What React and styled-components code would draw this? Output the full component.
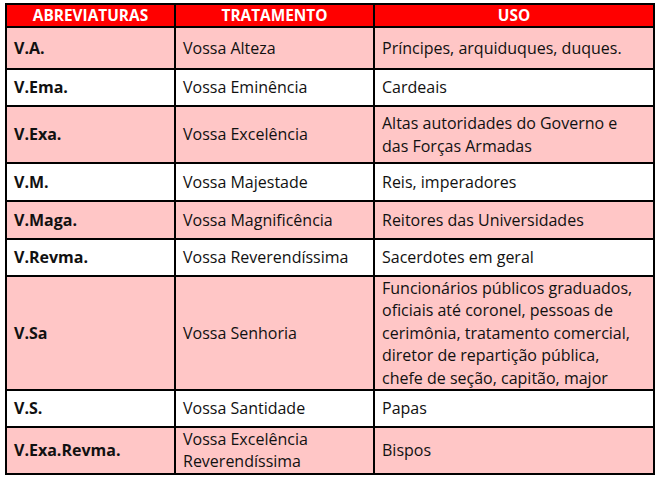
import styled, { createGlobalStyle } from "styled-components";

const GlobalStyle = createGlobalStyle`
  html, body {
    margin: 0;
    padding: 0;
    background: #ffffff;
  }
  body {
    font-family: "Open Sans", "Liberation Sans", sans-serif;
  }
`;

const Page = styled.div`
  padding: 3px 5px 0 5px;
`;

const Table = styled.table`
  width: 648px;
  border-collapse: collapse;
  table-layout: fixed;
  font-size: 16px;
  color: #111;
`;

const HeadCell = styled.th`
  height: 21px;
  padding: 0;
  background: #ff0000;
  color: #ffffff;
  font-weight: 700;
  font-size: 15.4px;
  text-align: center;
  border: 2px solid #000;
  line-height: 20px;
`;

const Row = styled.tr`
  background: ${(p) => (p.$shaded ? "#ffc6c6" : "#ffffff")};
  height: ${(p) => p.$h}px;
`;

const Cell = styled.td`
  padding: 0 5px 0 7px;
  border: 2px solid #000;
  vertical-align: middle;
  line-height: 22.4px;
  font-weight: ${(p) => (p.$bold ? 700 : 400)};
  white-space: nowrap;
`;

const Line = styled.div``;

const rows = [
  { abbr: "V.A.", trat: ["Vossa Alteza"], uso: ["Príncipes, arquiduques, duques."], h: 42 },
  { abbr: "V.Ema.", trat: ["Vossa Eminência"], uso: ["Cardeais"], h: 37 },
  {
    abbr: "V.Exa.",
    trat: ["Vossa Excelência"],
    uso: ["Altas autoridades do Governo e", "das Forças Armadas"],
    h: 57,
  },
  { abbr: "V.M.", trat: ["Vossa Majestade"], uso: ["Reis, imperadores"], h: 38 },
  { abbr: "V.Maga.", trat: ["Vossa Magnificência"], uso: ["Reitores das Universidades"], h: 38 },
  { abbr: "V.Revma.", trat: ["Vossa Reverendíssima"], uso: ["Sacerdotes em geral"], h: 37 },
  {
    abbr: "V.Sa",
    trat: ["Vossa Senhoria"],
    uso: [
      "Funcionários públicos graduados,",
      "oficiais até coronel, pessoas de",
      "cerimônia, tratamento comercial,",
      "diretor de repartição pública,",
      "chefe de seção, capitão, major",
    ],
    h: 114,
  },
  { abbr: "V.S.", trat: ["Vossa Santidade"], uso: ["Papas"], h: 37 },
  {
    abbr: "V.Exa.Revma.",
    trat: ["Vossa Excelência", "Reverendíssima"],
    uso: ["Bispos"],
    h: 46,
  },
];

export default function App() {
  return (
    <Page>
      <GlobalStyle />
      <Table>
        <colgroup>
          <col style={{ width: 169 }} />
          <col style={{ width: 199 }} />
          <col style={{ width: 280 }} />
        </colgroup>
        <thead>
          <tr>
            <HeadCell>ABREVIATURAS</HeadCell>
            <HeadCell>TRATAMENTO</HeadCell>
            <HeadCell>USO</HeadCell>
          </tr>
        </thead>
        <tbody>
          {rows.map((r, i) => (
            <Row key={r.abbr} $shaded={i % 2 === 0} $h={r.h}>
              <Cell $bold>{r.abbr}</Cell>
              <Cell>
                {r.trat.map((t) => (
                  <Line key={t}>{t}</Line>
                ))}
              </Cell>
              <Cell>
                {r.uso.map((t) => (
                  <Line key={t}>{t}</Line>
                ))}
              </Cell>
            </Row>
          ))}
        </tbody>
      </Table>
    </Page>
  );
}
